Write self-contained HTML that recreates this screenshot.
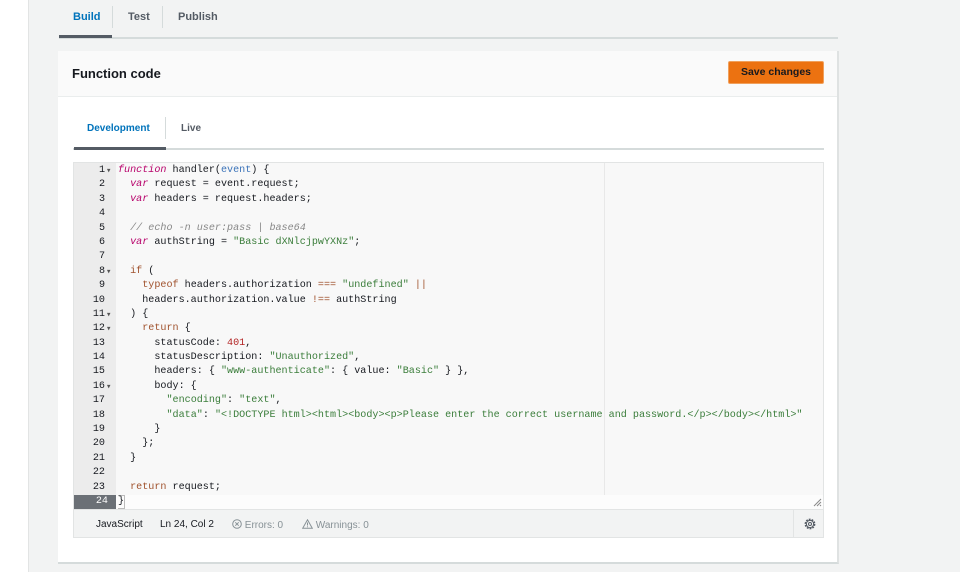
<!DOCTYPE html>
<html><head><meta charset="utf-8">
<style>
*{box-sizing:border-box;margin:0;padding:0}
body{width:960px;height:572px;overflow:hidden;background:#f2f3f3;font-family:"Liberation Sans",sans-serif;position:relative}
.lw{position:absolute;left:0;top:0;width:29px;height:572px;background:#fff;border-right:1px solid #e2e4e4}
.tabs{position:absolute;left:59px;top:0;width:779px;height:39px;border-bottom:2px solid #d5dbdb}
.tab{position:absolute;top:11px;font-size:11px;font-weight:bold;color:#545b64}
.sep{position:absolute;top:6px;width:1px;height:22px;background:#d5dbdb}
.card{position:absolute;left:58px;top:51px;width:781px;height:513px;background:#fff;border-right:2px solid #dfe2e2;border-bottom:2px solid #d5dbdb}
.hdr{height:46px;background:#fafafa;border-bottom:1px solid #eaeded;position:relative}
.hdr h2{position:absolute;left:14px;top:15px;font-size:13px;font-weight:bold;color:#16191f}
.btn{position:absolute;left:670px;top:10px;width:96px;height:23px;background:#ec7211;border:1px solid #f0a05c;border-radius:2px;font-size:10.5px;font-weight:bold;color:#16191f;text-align:center;line-height:21px}
.stabs{position:absolute;left:15px;top:97px;width:751px;height:2px;background:#d5dbdb}
.editor{position:absolute;left:15px;top:111px;width:751px;height:376px;border:1px solid #e2e4e4;background:#f8f8f8;overflow:hidden}
.gut{position:absolute;left:0;top:0;width:42px;height:346px;background:#ececec}
.pm{position:absolute;left:530px;top:0;width:1px;height:346px;background:#e8e8e8}
.code{position:absolute;left:0;top:1px;width:751px;font-family:"Liberation Mono",monospace;font-size:10.1px;line-height:14.4px;color:#16191f}
.l{height:14.4px;white-space:pre;position:relative}
.n{display:inline-block;width:31px;text-align:right;color:#16191f}
.f{display:inline-block;width:13px;font-size:9px;color:#555;vertical-align:top;padding-left:1px}
.k{color:#b7006a;font-style:italic}
.r{color:#a0522d}
.s{color:#3a7d3a}
.c{color:#888;font-style:italic}
.p{color:#3b73b9}
.num{color:#b22222}
.act{background:#fcfcfc}
.act .n{background:#6b7076;color:#fff;width:42px;padding-right:8px;margin-right:2px}
.status{position:absolute;left:0;top:346px;width:751px;height:29px;background:#f2f3f3;border-top:1px solid #e2e4e4;font-size:10px;color:#16191f}
.status span{position:absolute;top:9px}
.gear{position:absolute;left:719px;top:0;width:32px;height:29px;border-left:1px solid #e2e4e4}
</style></head><body>
<div class="lw"></div>
<div class="tabs">
<div class="tab" style="left:14px;color:#0073bb">Build</div>
<div style="position:absolute;left:0;top:35px;width:53px;height:3px;background:#545b64"></div>
<div class="sep" style="left:53px"></div>
<div class="tab" style="left:69px">Test</div>
<div class="sep" style="left:103px"></div>
<div class="tab" style="left:119px">Publish</div>
</div>
<div class="card">
<div class="hdr"><h2>Function code</h2><div class="btn">Save changes</div></div>
<div style="position:absolute;left:29px;top:72px;font-size:10px;font-weight:bold;color:#0073bb">Development</div>
<div style="position:absolute;left:107px;top:66px;width:1px;height:22px;background:#d5dbdb"></div>
<div style="position:absolute;left:123px;top:72px;font-size:10px;font-weight:bold;color:#545b64">Live</div>
<div class="stabs"></div>
<div style="position:absolute;left:16px;top:96px;width:92px;height:3px;background:#545b64"></div>
<div class="editor">
<div class="gut"></div><div class="pm"></div>
<div class="code">
<div class="l"><span class="n">1</span><span class="f">▾</span><span class="k">function</span> handler(<span class="p">event</span>) {</div>
<div class="l"><span class="n">2</span><span class="f"></span>  <span class="k">var</span> request = event.request;</div>
<div class="l"><span class="n">3</span><span class="f"></span>  <span class="k">var</span> headers = request.headers;</div>
<div class="l"><span class="n">4</span><span class="f"></span></div>
<div class="l"><span class="n">5</span><span class="f"></span>  <span class="c">// echo -n user:pass | base64</span></div>
<div class="l"><span class="n">6</span><span class="f"></span>  <span class="k">var</span> authString = <span class="s">"Basic dXNlcjpwYXNz"</span>;</div>
<div class="l"><span class="n">7</span><span class="f"></span></div>
<div class="l"><span class="n">8</span><span class="f">▾</span>  <span class="r">if</span> (</div>
<div class="l"><span class="n">9</span><span class="f"></span>    <span class="r">typeof</span> headers.authorization <span class="r">===</span> <span class="s">"undefined"</span> <span class="r">||</span></div>
<div class="l"><span class="n">10</span><span class="f"></span>    headers.authorization.value <span class="r">!==</span> authString</div>
<div class="l"><span class="n">11</span><span class="f">▾</span>  ) {</div>
<div class="l"><span class="n">12</span><span class="f">▾</span>    <span class="r">return</span> {</div>
<div class="l"><span class="n">13</span><span class="f"></span>      statusCode: <span class="num">401</span>,</div>
<div class="l"><span class="n">14</span><span class="f"></span>      statusDescription: <span class="s">"Unauthorized"</span>,</div>
<div class="l"><span class="n">15</span><span class="f"></span>      headers: { <span class="s">"www-authenticate"</span>: { value: <span class="s">"Basic"</span> } },</div>
<div class="l"><span class="n">16</span><span class="f">▾</span>      body: {</div>
<div class="l"><span class="n">17</span><span class="f"></span>        <span class="s">"encoding"</span>: <span class="s">"text"</span>,</div>
<div class="l"><span class="n">18</span><span class="f"></span>        <span class="s">"data"</span>: <span class="s">"&lt;!DOCTYPE html&gt;&lt;html&gt;&lt;body&gt;&lt;p&gt;Please enter the correct username and password.&lt;/p&gt;&lt;/body&gt;&lt;/html&gt;"</span></div>
<div class="l"><span class="n">19</span><span class="f"></span>      }</div>
<div class="l"><span class="n">20</span><span class="f"></span>    };</div>
<div class="l"><span class="n">21</span><span class="f"></span>  }</div>
<div class="l"><span class="n">22</span><span class="f"></span></div>
<div class="l"><span class="n">23</span><span class="f"></span>  <span class="r">return</span> request;</div>
<div class="l act"><span class="n">24</span><span style="display:inline-block;border:1px solid #bbb;border-left:none;line-height:12px">}</span></div>
</div>
<svg style="position:absolute;left:739px;top:335px" width="9" height="9"><path d="M1 8L8 1M4 8L8 4M7 8L8 7" stroke="#888" stroke-width="1"/></svg>
<div class="status">
<span style="left:22px">JavaScript</span>
<span style="left:86px">Ln 24, Col 2</span>
<span style="left:158px;color:#879196"><svg width="10" height="10" style="vertical-align:-1px"><circle cx="5" cy="5" r="4.3" fill="none" stroke="#879196"/><path d="M3.3 3.3L6.7 6.7M6.7 3.3L3.3 6.7" stroke="#879196"/></svg> Errors: 0</span>
<span style="left:228px;color:#879196"><svg width="11" height="10" style="vertical-align:-1px"><path d="M5.5 0.8L10.3 9.3H0.7Z" fill="none" stroke="#879196"/><path d="M5.5 3.5V6.5M5.5 7.4V8.3" stroke="#879196"/></svg> Warnings: 0</span>
<div class="gear"><svg width="12" height="12" style="position:absolute;left:10px;top:8px" viewBox="0 0 12 12"><circle cx="6" cy="6" r="4.6" fill="none" stroke="#545b64" stroke-width="1.6" stroke-dasharray="1.8 1.1"/><circle cx="6" cy="6" r="3.6" fill="none" stroke="#545b64" stroke-width="1"/><circle cx="6" cy="6" r="1.5" fill="none" stroke="#545b64" stroke-width="1"/></svg></div>
</div>
</div>
</div>
</body></html>
